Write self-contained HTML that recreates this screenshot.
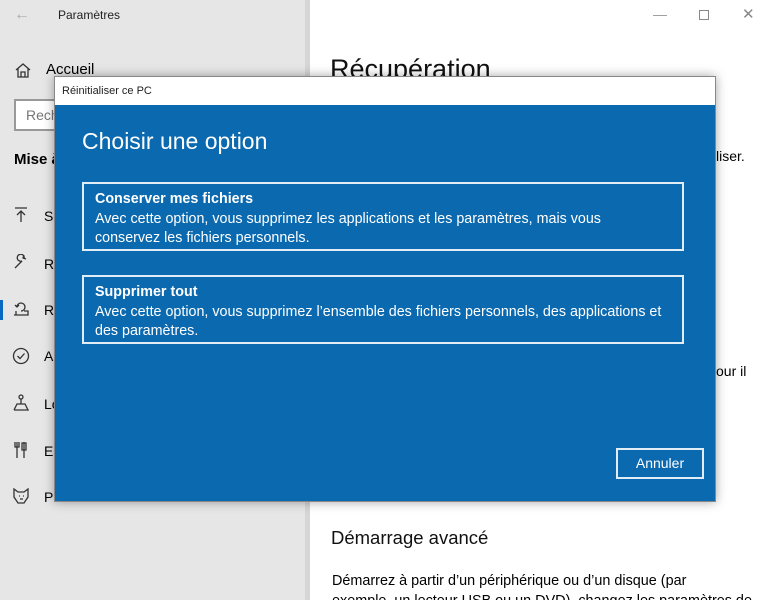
<!DOCTYPE html>
<html><head><meta charset="utf-8"><style>
*{margin:0;padding:0;box-sizing:border-box}
html,body{width:772px;height:600px;overflow:hidden}
body{position:relative;background:#fff;font-family:"Liberation Sans",sans-serif;color:#000}
.side{position:absolute;left:0;top:0;width:308px;height:600px;background:#e6e6e6}
.sb{position:absolute;left:305px;top:0;width:5px;height:600px;background:#d6d6d6}
.t{position:absolute;white-space:nowrap}
.dlg{position:absolute;left:54px;top:76px;width:662px;height:426px;box-shadow:0 0 10px rgba(0,0,0,.35);border:1px solid #888}
.title{height:28px;background:#fff;font-size:11px;padding:8px 0 0 7px;color:#222}
.body{position:absolute;top:28px;left:0;right:0;bottom:0;background:#0b69af;color:#fff}
.opt{position:absolute;left:27px;width:602px;height:69px;border:2px solid #e0ecf6;padding:6px 11px;font-size:14.3px;line-height:19.5px;white-space:nowrap;overflow:hidden}
.btn{position:absolute;left:561px;top:343px;width:88px;height:31px;border:2px solid #e0ecf6;font-size:14px;text-align:center;line-height:27px}
svg{position:absolute;stroke:#333;fill:none;stroke-width:1.3}
</style></head><body>
<div class="side"></div>
<div class="sb"></div>
<div class="t" style="left:14px;top:6px;color:#aaa;font-size:16px">←</div>
<div class="t" style="left:58px;top:8px;font-size:12px;color:#222">Paramètres</div>
<svg style="left:14px;top:62px" width="18" height="16" viewBox="0 0 18 16"><path d="M2 8 L9 2 L16 8 M4 6 V15 H14 V6 M7 15 V10 H11 V15"/></svg>
<div class="t" style="left:46px;top:61px;font-size:15px">Accueil</div>
<div style="position:absolute;left:14px;top:99px;width:60px;height:32px;border:2px solid #999;background:#fff"></div>
<div class="t" style="left:26px;top:107px;font-size:14px;color:#777">Rech</div>
<div class="t" style="left:14px;top:151px;font-size:15px;font-weight:bold">Mise à</div>
<svg style="left:14px;top:207px" width="14" height="16"><path d="M1 1H13 M7 4V15 M3 8 L7 4 L11 8"/></svg>
<div class="t" style="left:44px;top:208px;font-size:14px">Sa</div>
<svg style="left:13px;top:254px" width="16" height="16"><path d="M2 14 L9 7 A3.5 3.5 0 1 1 11 5 M11 1 L10 4 L13 5"/></svg>
<div class="t" style="left:44px;top:256px;font-size:14px">Re</div>
<div style="position:absolute;left:0;top:300px;width:3px;height:20px;background:#0a6ac0"></div>
<svg style="left:13px;top:301px" width="16" height="16"><path d="M1 14H15V10H11 M3 10V14 M4 6 A4 4 0 1 1 8 10 M2 4 L4 6 L6 4"/></svg>
<div class="t" style="left:44px;top:302px;font-size:14px">Re</div>
<svg style="left:12px;top:347px" width="18" height="18"><circle cx="9" cy="9" r="7.5"/><path d="M5.5 9 L8 11.5 L12.5 6.5"/></svg>
<div class="t" style="left:44px;top:348px;font-size:14px">A</div>
<svg style="left:13px;top:394px" width="16" height="18"><circle cx="8" cy="3" r="2"/><path d="M8 5V10 M1 16H15 L12 10H4 L1 16"/></svg>
<div class="t" style="left:44px;top:396px;font-size:14px">Lo</div>
<svg style="left:14px;top:441px" width="14" height="18"><path d="M3 1V17 M10 1V17 M1 1V6H5V1 M8 2H12V9H8Z"/></svg>
<div class="t" style="left:44px;top:443px;font-size:14px">Es</div>
<svg style="left:12px;top:488px" width="18" height="16"><path d="M2 1 L6 4H12L16 1V9 L12 15H6 L2 9Z M7 8H8 M11 8H12 M8 11H11"/></svg>
<div class="t" style="left:44px;top:489px;font-size:14px">Pr</div>
<div class="t" style="left:653px;top:6px;color:#999;font-size:14px">—</div>
<div style="position:absolute;left:699px;top:10px;width:10px;height:10px;border:1px solid #888"></div>
<div class="t" style="left:742px;top:5px;color:#888;font-size:15px">✕</div>
<div class="t" style="left:330px;top:54px;font-size:27px;color:#111">Récupération</div>
<div class="t" style="left:716px;top:148px;font-size:14px">liser.</div>
<div class="t" style="left:716px;top:363px;font-size:14px">our il</div>
<div class="t" style="left:331px;top:527px;font-size:18.5px;color:#111">Démarrage avancé</div>
<div class="t" style="left:332px;top:571px;font-size:14.4px;line-height:20px">Démarrez à partir d’un périphérique ou d’un disque (par<br>exemple, un lecteur USB ou un DVD), changez les paramètres de</div>
<div class="dlg">
<div class="title">Réinitialiser ce PC</div>
<div class="body">
<div class="t" style="left:27px;top:23px;font-size:23px">Choisir une option</div>
<div class="opt" style="top:77px"><b>Conserver mes fichiers</b><br>Avec cette option, vous supprimez les applications et les paramètres, mais vous<br>conservez les fichiers personnels.</div>
<div class="opt" style="top:170px"><b>Supprimer tout</b><br>Avec cette option, vous supprimez l’ensemble des fichiers personnels, des applications et<br>des paramètres.</div>
<div class="btn">Annuler</div>
</div></div>
</body></html>
